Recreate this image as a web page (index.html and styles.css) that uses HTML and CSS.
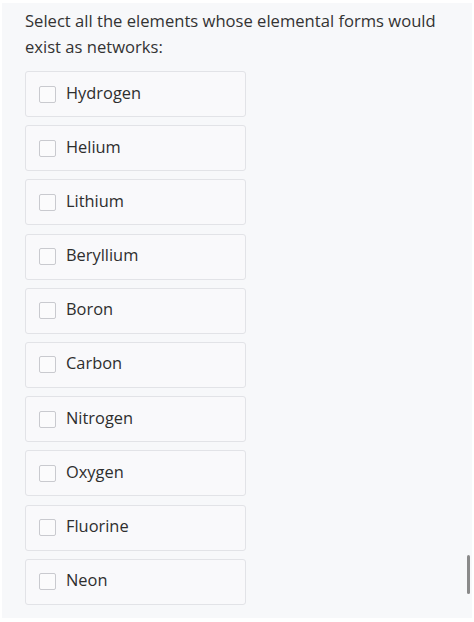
FILE: index.html
```html
<!DOCTYPE html>
<html>
<head>
<meta charset="utf-8">
<link rel="stylesheet" href="styles.css">
</head>
<body>
<div class="panel">
  <p class="question">Select all the elements whose elemental forms would exist as networks:</p>
  <div class="options">
    <label class="option"><span class="box"></span><span class="label">Hydrogen</span></label>
    <label class="option"><span class="box"></span><span class="label">Helium</span></label>
    <label class="option"><span class="box"></span><span class="label">Lithium</span></label>
    <label class="option"><span class="box"></span><span class="label">Beryllium</span></label>
    <label class="option"><span class="box"></span><span class="label">Boron</span></label>
    <label class="option"><span class="box"></span><span class="label">Carbon</span></label>
    <label class="option"><span class="box"></span><span class="label">Nitrogen</span></label>
    <label class="option"><span class="box"></span><span class="label">Oxygen</span></label>
    <label class="option"><span class="box"></span><span class="label">Fluorine</span></label>
    <label class="option"><span class="box"></span><span class="label">Neon</span></label>
  </div>
  <div class="scrollbar"></div>
</div>
</body>
</html>
```
FILE: styles.css
```css
html, body {
  margin: 0;
  padding: 0;
  background: #ffffff;
}
body {
  font-family: "Open Sans", "Liberation Sans", sans-serif;
  color: #333333;
}
.panel {
  position: relative;
  margin: 3px 2px 0 2px;
  height: 615px;
  background: #f7f8fa;
  padding: 5px 0 0 23px;
  box-sizing: border-box;
}
.question {
  margin: 0;
  font-size: 16.6px;
  line-height: 26px;
  width: 430px;
}
.options {
  margin-top: 11px;
  display: flex;
  flex-direction: column;
  gap: 8.2px;
}
.option {
  display: flex;
  align-items: center;
  width: 221px;
  height: 46px;
  box-sizing: border-box;
  border: 1px solid #e2e3e7;
  border-radius: 3px;
  background: #f9f9fb;
  padding-left: 13px;
}
.box {
  width: 17px;
  height: 17px;
  box-sizing: border-box;
  border: 1px solid #c9cacf;
  border-radius: 2px;
  background: #fbfbfc;
  flex: none;
}
.label {
  margin-left: 10px;
  font-size: 16.4px;
  line-height: 20px;
  padding-bottom: 3px;
  color: #2e2e2e;
}
.scrollbar {
  position: absolute;
  left: 465px;
  top: 552px;
  width: 3px;
  height: 39px;
  border-radius: 2px;
  background: #8a8a8a;
}
```
